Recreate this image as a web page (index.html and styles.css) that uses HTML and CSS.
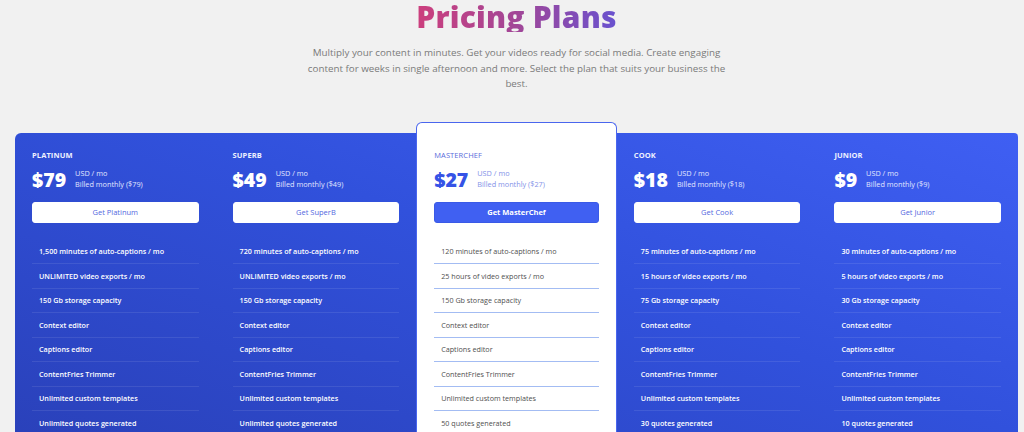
FILE: index.html
```html
<!DOCTYPE html>
<html lang="en">
<head>
<meta charset="utf-8">
<title>Pricing Plans</title>
<link rel="stylesheet" href="styles.css">
</head>
<body>
<div class="page">
  <header class="intro">
    <h1 class="title">Pricing Plans</h1>
    <p class="lead">Multiply your content in minutes. Get your videos ready for social media. Create engaging content for weeks in single afternoon and more. Select the plan that suits your business the best.</p>
  </header>

  <section class="plans">
    <div class="plan">
      <div class="plan-name">PLATINUM</div>
      <div class="price-row">
        <span class="price">$79</span>
        <span class="price-meta"><span>USD / mo</span><span>Billed monthly ($79)</span></span>
      </div>
      <button class="btn">Get Platinum</button>
      <ul class="features">
        <li>1,500 minutes of auto-captions / mo</li>
        <li>UNLIMITED video exports / mo</li>
        <li>150 Gb storage capacity</li>
        <li>Context editor</li>
        <li>Captions editor</li>
        <li>ContentFries Trimmer</li>
        <li>Unlimited custom templates</li>
        <li>Unlimited quotes generated</li>
      </ul>
    </div>

    <div class="plan">
      <div class="plan-name">SUPERB</div>
      <div class="price-row">
        <span class="price">$49</span>
        <span class="price-meta"><span>USD / mo</span><span>Billed monthly ($49)</span></span>
      </div>
      <button class="btn">Get SuperB</button>
      <ul class="features">
        <li>720 minutes of auto-captions / mo</li>
        <li>UNLIMITED video exports / mo</li>
        <li>150 Gb storage capacity</li>
        <li>Context editor</li>
        <li>Captions editor</li>
        <li>ContentFries Trimmer</li>
        <li>Unlimited custom templates</li>
        <li>Unlimited quotes generated</li>
      </ul>
    </div>

    <div class="plan plan-featured">
      <div class="plan-name">MASTERCHEF</div>
      <div class="price-row">
        <span class="price">$27</span>
        <span class="price-meta"><span>USD / mo</span><span>Billed monthly ($27)</span></span>
      </div>
      <button class="btn">Get MasterChef</button>
      <ul class="features">
        <li>120 minutes of auto-captions / mo</li>
        <li>25 hours of video exports / mo</li>
        <li>150 Gb storage capacity</li>
        <li>Context editor</li>
        <li>Captions editor</li>
        <li>ContentFries Trimmer</li>
        <li>Unlimited custom templates</li>
        <li>50 quotes generated</li>
      </ul>
    </div>

    <div class="plan">
      <div class="plan-name">COOK</div>
      <div class="price-row">
        <span class="price">$18</span>
        <span class="price-meta"><span>USD / mo</span><span>Billed monthly ($18)</span></span>
      </div>
      <button class="btn">Get Cook</button>
      <ul class="features">
        <li>75 minutes of auto-captions / mo</li>
        <li>15 hours of video exports / mo</li>
        <li>75 Gb storage capacity</li>
        <li>Context editor</li>
        <li>Captions editor</li>
        <li>ContentFries Trimmer</li>
        <li>Unlimited custom templates</li>
        <li>30 quotes generated</li>
      </ul>
    </div>

    <div class="plan">
      <div class="plan-name">JUNIOR</div>
      <div class="price-row">
        <span class="price">$9</span>
        <span class="price-meta"><span>USD / mo</span><span>Billed monthly ($9)</span></span>
      </div>
      <button class="btn">Get Junior</button>
      <ul class="features">
        <li>30 minutes of auto-captions / mo</li>
        <li>5 hours of video exports / mo</li>
        <li>30 Gb storage capacity</li>
        <li>Context editor</li>
        <li>Captions editor</li>
        <li>ContentFries Trimmer</li>
        <li>Unlimited custom templates</li>
        <li>10 quotes generated</li>
      </ul>
    </div>
  </section>
</div>
</body>
</html>
```

FILE: styles.css
```css
* { box-sizing: border-box; }

html, body {
  margin: 0;
  padding: 0;
  background: #f1f1f1;
  font-family: "Open Sans", "Noto Sans", Arial, sans-serif;
}

.page {
  padding: 0 6px 0 15px;
  overflow: hidden;
  height: 432px;
}

.intro {
  display: flex;
  flex-direction: column;
  align-items: center;
}

.title {
  margin: 1px 0 0;
  font-size: 30px;
  line-height: 31px;
  font-weight: 800;
  letter-spacing: 0.2px;
  background: linear-gradient(90deg, #cc3f7d 0%, #a24697 50%, #6952cf 100%);
  -webkit-background-clip: text;
  background-clip: text;
  color: transparent;
}

.lead {
  margin: 13px 0 0;
  width: 432px;
  text-align: center;
  font-size: 9.8px;
  line-height: 15.5px;
  color: #7a7a7a;
}

.plans {
  margin-top: 41px;
  display: grid;
  grid-template-columns: repeat(5, 1fr);
  background: linear-gradient(200deg, #3f5ff3 0%, #3151dc 45%, #2a41ba 100%);
  border-radius: 6px 4px 0 0;
  color: #fff;
}

.plan {
  padding: 17px 17px 0;
}

.plan-name {
  font-size: 7.5px;
  line-height: 11px;
  font-weight: 700;
  color: #eef1ff;
  letter-spacing: 0.1px;
}

.price-row {
  margin-top: 8px;
  display: flex;
  align-items: center;
  gap: 9px;
}

.price {
  font-size: 19.5px;
  line-height: 22px;
  font-weight: 800;
}

.price-meta {
  display: flex;
  flex-direction: column;
  margin-top: -2px;
  font-size: 7.3px;
  line-height: 11px;
  color: #e2e7ff;
}

.btn {
  display: block;
  width: 100%;
  height: 21px;
  margin-top: 11px;
  padding: 0;
  border: 1px solid #ffffff;
  border-radius: 3px;
  background: #ffffff;
  font-family: inherit;
  font-size: 7.5px;
  color: #5468e0;
}

.features {
  list-style: none;
  margin: 17px 0 0;
  padding: 0;
}

.features li {
  height: 24.5px;
  display: flex;
  align-items: center;
  padding-left: 7px;
  font-size: 7.2px;
  font-weight: 600;
  border-bottom: 1px solid rgba(255, 255, 255, 0.09);
}

.plan-featured {
  margin-top: -11px;
  padding: 27px 17px 0 17px;
  background: #ffffff;
  border: 1px solid #4a66ee;
  border-bottom: none;
  border-radius: 6px 6px 0 0;
  color: #505050;
}

.plan-featured .plan-name {
  color: #5b6cdb;
  font-weight: 500;
}

.plan-featured .price {
  color: #3553e6;
}

.plan-featured .price-meta {
  color: #8391e8;
}

.plan-featured .btn {
  background: #4060f2;
  border-color: #3a5ae6;
  color: #ffffff;
  font-weight: 700;
}

.plan-featured .features li {
  font-weight: 400;
  color: #4f4f4f;
  border-bottom: 1px solid #a3bcf3;
}
```
